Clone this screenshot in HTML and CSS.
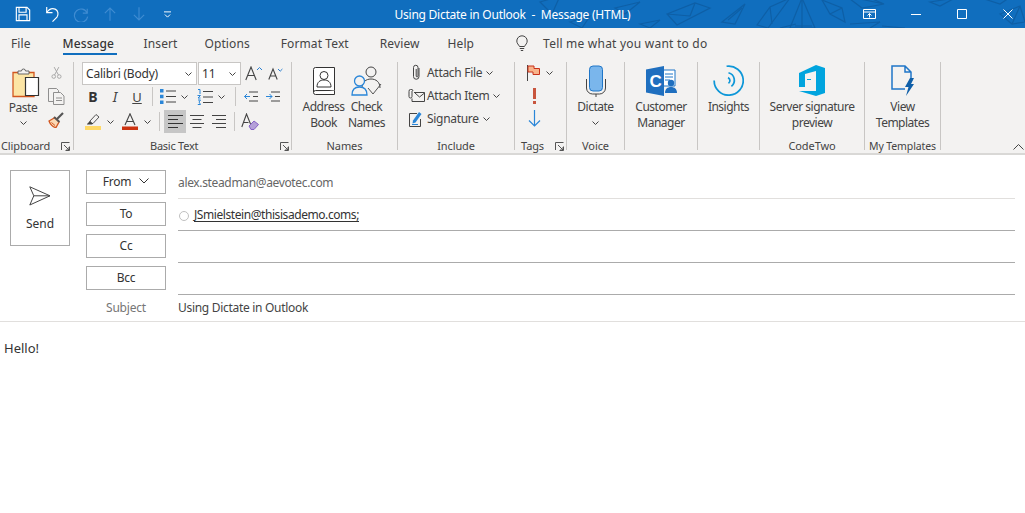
FILE: index.html
```html
<!DOCTYPE html>
<html lang="en">
<head>
<meta charset="utf-8">
<title>Using Dictate in Outlook - Message (HTML)</title>
<link rel="stylesheet" href="styles.css">
</head>
<body>
<header class="titlebar">
  <svg class="pattern" viewBox="0 0 1025 28" width="1025" height="28" aria-hidden="true">
    <g fill="none" stroke="#0e5fa6" stroke-width="1.2">
      <path d="M540 2L560 -4 552 14zM552 14L540 2"/>
      <path d="M667 14L695 3 710 8 677 25zM695 3L690 16M667 14L690 16"/>
      <path d="M722 22L745 4 735 24zM728 20L742 8"/>
      <path d="M757 25L770 7 790 -2 768 28zM770 7L772 24"/>
      <path d="M790 28L802 -2 815 28zM802 -2V28M795 26H812"/>
      <path d="M822 0L842 8 845 22 830 14zM830 14L842 8"/>
      <path d="M846 -4L884 4 862 8zM884 4L870 -2"/>
      <path d="M930 2L955 -2 940 6z"/>
      <path d="M975 -4L1000 4 1012 -4z"/>
      <path d="M1000 14L1020 6 1025 22 1012 24zM1020 6L1012 24"/>
      <path d="M882 26L905 28M850 24L880 22 870 28M780 28L796 24M615 8L640 2 625 14z"/>
      <path d="M570 22L590 16 582 28zM640 24L660 20 650 28z"/>
    </g>
  </svg>
  <div class="qat">
    <svg class="qat-save" width="16" height="16" viewBox="0 0 18 18"><g fill="none" stroke="#fff" stroke-width="1.300"><path d="M1.500 1.500h12l3 3v12h-15z"/><path d="M4.500 1.500v5.500h8v-5.500M4.500 16.500v-6.500h9v6.500"/></g></svg>
    <svg class="qat-undo" width="15" height="16" viewBox="0 0 16 18"><g fill="none" stroke="#fff" stroke-width="1.300"><path d="M1.500 1v6.500h6.500"/><path d="M1.500 7.500C4 3.500 8 2.500 11 3.500c3.500 1.500 4 6 2 9L8 17.500"/></g></svg>
    <svg class="qat-redo" width="16" height="16" viewBox="0 0 18 18"><g fill="none" stroke="#3f8cd2" stroke-width="1.300"><path d="M16 3v5h-5"/><path d="M16 8A7.500 7.500 0 1 0 16.500 12"/></g></svg>
    <svg class="qat-up" width="12" height="16" viewBox="0 0 14 18"><path d="M7 17V2M1 8l6-6 6 6" fill="none" stroke="#3f8cd2" stroke-width="1.300"/></svg>
    <svg class="qat-down" width="12" height="16" viewBox="0 0 14 18"><path d="M7 1v15M1 10l6 6 6-6" fill="none" stroke="#3f8cd2" stroke-width="1.300"/></svg>
    <svg class="qat-more" width="7" height="7" viewBox="0 0 8 8"><path d="M0 1h8M1 4l3 3 3-3" fill="none" stroke="#fff" stroke-width="1.100"/></svg>
  </div>
  <div class="title">Using Dictate in Outlook&nbsp; -&nbsp; Message (HTML)</div>
  <div class="winctl">
    <svg class="win-ribbon" width="13" height="10" viewBox="0 0 13 10"><g fill="none" stroke="#fff"><path d="M.5.500h12v9H.5zM.5 3h12M6.500 8.500V4.500M4.500 6.500l2-2 2 2"/></g></svg>
    <svg class="win-min" width="10" height="1" viewBox="0 0 10 1"><path d="M0 .5h10" stroke="#fff"/></svg>
    <svg class="win-max" width="10" height="10" viewBox="0 0 10 10"><path d="M.5.500h9v9h-9z" fill="none" stroke="#fff"/></svg>
    <svg class="win-close" width="10" height="10" viewBox="0 0 10 10"><path d="M.5.500l9 9M9.500.500l-9 9" fill="none" stroke="#fff"/></svg>
  </div>
</header>

<nav class="tabs">
  <span class="tab t-file">File</span>
  <span class="tab t-message active">Message</span>
  <span class="tab t-insert">Insert</span>
  <span class="tab t-options">Options</span>
  <span class="tab t-format">Format Text</span>
  <span class="tab t-review">Review</span>
  <span class="tab t-help">Help</span>
  <svg class="bulb" width="12" height="17" viewBox="0 0 12 17"><path d="M3.500 11.500C2.500 9.500.8 8.500.8 6A5.200 5.200 0 0 1 11.200 6c0 2.500-1.700 3.500-2.700 5.500zM3.800 13.500h4.400M4.800 15.500h2.400" fill="none" stroke="#444" stroke-width="1"/></svg>
  <span class="tell">Tell me what you want to do</span>
</nav>

<section class="ribbon">
  <div class="group g-clip">
    <div class="g-body clip-body">
      <div class="paste">
        <svg class="paste-ico" width="28" height="30" viewBox="0 0 28 30"><path d="M1 4.500h21v24H1z" fill="#fce5a5" stroke="#d2561f" stroke-width="1.300"/><path d="M6 6V3h3.500a2 2 0 0 1 4 0H17v3z" fill="#f3f2f1" stroke="#666"/><path d="M13.500 9.500h13v18h-13z" fill="#fff" stroke="#333" stroke-width="1.200"/></svg>
        <span class="lbl">Paste</span>
        <svg class="chev-s" width="7" height="4" viewBox="0 0 7 4"><path d="M.5.500l3 3 3-3" fill="none" stroke="#444"/></svg>
      </div>
      <div class="clip-tools">
        <svg width="11" height="16" viewBox="0 0 14 16"><g fill="none" stroke="#a5a5a5" stroke-width="1.200"><circle cx="3.500" cy="12.500" r="2.300"/><circle cx="10.500" cy="12.500" r="2.300"/><path d="M4.500 10.500L10 .5M9.500 10.500L4 .5"/></g></svg>
        <svg width="17" height="17" viewBox="0 0 17 17"><g fill="#f3f2f1" stroke="#8f8f8f"><path d="M.5.500h8l2 2v11H.5z"/><path d="M5.500 4.500h7l3.500 3.500v8.500H5.500z"/><path d="M8 10h6M8 12.500h6" fill="none"/></g></svg>
        <svg width="17" height="16" viewBox="0 0 17 16"><path d="M9 7l6-6" stroke="#555" stroke-width="2.200"/><path d="M1 9l6-3.500 4 4.500-3 5.500C5 15.500 2 12 1 9z" fill="#fbd9b4" stroke="#d2561f" stroke-width="1.300"/><path d="M6 5l5.500 5" stroke="#555" stroke-width="1.800"/><path d="M3.500 10.500l3.500 3" stroke="#d2561f"/></svg>
      </div>
    </div>
    <div class="g-label label-clip"><span>Clipboard</span><svg class="launch" width="9" height="9" viewBox="0 0 9 9"><path d="M.5 8V.5h8M8.500 4.500v4h-4M3 3l5 5M5 8h3V5" fill="none" stroke="#555"/></svg></div>
  </div>

  <div class="group g-basic">
    <div class="g-body basic-body">
      <div class="brow brow-1">
        <div class="combo combo-font"><span>Calibri (Body)</span><svg width="7" height="4" viewBox="0 0 7 4"><path d="M.5.500l3 3 3-3" fill="none" stroke="#444"/></svg></div>
        <div class="combo combo-size"><span>11</span><svg width="7" height="4" viewBox="0 0 7 4"><path d="M.5.500l3 3 3-3" fill="none" stroke="#444"/></svg></div>
        <svg class="grow" width="17" height="15" viewBox="0 0 17 15"><path d="M.8 14L6 1l5.200 13M2.700 9.500h6.600" fill="none" stroke="#444" stroke-width="1.100"/><path d="M12 4l2.500-2.500L17 4" fill="none" stroke="#2a7fd0"/></svg>
        <svg class="shrink" width="15" height="13" viewBox="0 0 15 13"><path d="M.8 12.500L5 2l4.200 10.500M2.300 9h5.400" fill="none" stroke="#444" stroke-width="1.100"/><path d="M10 2l2.200 2.200L14.400 2" fill="none" stroke="#2a7fd0"/></svg>
      </div>
      <div class="brow brow-2">
        <span class="cell c22 bold">B</span>
        <span class="cell c22 ital">I</span>
        <span class="cell c22 under">U</span>
        <i class="vsep vsep-a"></i>
        <div class="cell c36">
          <svg width="16" height="15" viewBox="0 0 16 15"><path d="M0 0h3.500v3.500H0zM0 5.700h3.500v3.500H0zM0 11.500h3.500V15H0z" fill="#2a86d8"/><path d="M6 2h10M6 7.500h10M6 13h10" stroke="#444" fill="none"/></svg>
          <svg class="ml-c" width="7" height="4" viewBox="0 0 7 4"><path d="M.5.500l3 3 3-3" fill="none" stroke="#444"/></svg>
        </div>
        <div class="cell c37">
          <svg width="16" height="16" viewBox="0 0 16 16"><path d="M1 .5h2V5M.5 6.500h3L1 9h2.500M1 11h2.500L2 13l1.500 2.500H.8" fill="none" stroke="#2a86d8" stroke-width="1"/><path d="M6 2.500h10M6 8h10M6 13.500h10" stroke="#444" fill="none"/></svg>
          <svg class="ml-c" width="7" height="4" viewBox="0 0 7 4"><path d="M.5.500l3 3 3-3" fill="none" stroke="#444"/></svg>
        </div>
        <i class="vsep vsep-b"></i>
        <span class="cell c22"><svg width="14" height="11" viewBox="0 0 14 11"><path d="M5 1h9M9 5.500h5M5 10h9" stroke="#444" fill="none"/><path d="M6 5.500H.5M3 3L.5 5.500 3 8" stroke="#2a86d8" fill="none"/></svg></span>
        <span class="cell c22"><svg width="14" height="11" viewBox="0 0 14 11"><path d="M5 1h9M9 5.500h5M5 10h9" stroke="#444" fill="none"/><path d="M0 5.500h6M3.500 3L6 5.500 3.500 8" stroke="#2a86d8" fill="none"/></svg></span>
      </div>
      <div class="brow brow-3">
        <div class="cell c34">
          <svg width="16" height="17" viewBox="0 0 16 17"><path d="M5 8l6-6.500 3 2.500-6 6.500H5z" fill="none" stroke="#555"/><path d="M2 11l3-3 3 2.500-1 1H2z" fill="#444"/><path d="M0 13h16v4H0z" fill="#ffd966"/></svg>
          <svg class="ml-h" width="7" height="4" viewBox="0 0 7 4"><path d="M.5.500l3 3 3-3" fill="none" stroke="#444"/></svg>
        </div>
        <div class="cell c37b">
          <svg width="16" height="17" viewBox="0 0 16 17"><path d="M3 12L8 .8 13 12M4.700 8.500h6.600" fill="none" stroke="#444" stroke-width="1.100"/><path d="M0 13.500h16V17H0z" fill="#cc3311"/></svg>
          <svg class="ml-h" width="7" height="4" viewBox="0 0 7 4"><path d="M.5.500l3 3 3-3" fill="none" stroke="#444"/></svg>
        </div>
        <i class="vsep vsep-c"></i>
        <span class="cell c22 sel"><svg width="15" height="13" viewBox="0 0 15 13"><path d="M0 .5h15M0 4.500h10M0 8.500h15M0 12.500h10" stroke="#333" fill="none"/></svg></span>
        <span class="cell c22"><svg width="14" height="13" viewBox="0 0 14 13"><path d="M0 .5h14M2.500 4.500h9M0 8.500h14M2.500 12.500h9" stroke="#444" fill="none"/></svg></span>
        <span class="cell c22"><svg width="14" height="13" viewBox="0 0 14 13"><path d="M0 .5h14M4 4.500h10M0 8.500h14M4 12.500h10" stroke="#444" fill="none"/></svg></span>
        <i class="vsep vsep-d"></i>
        <span class="cell c22"><svg width="18" height="17" viewBox="0 0 18 17"><path d="M.8 14L5.500 1l4 10M2.500 9.500h5" fill="none" stroke="#444" stroke-width="1.100"/><path d="M8 13l5-5 4.500 3.500-4.500 5H10z" fill="#b4a0d8" stroke="#8661c5"/></svg></span>
      </div>
    </div>
    <div class="g-label label-basic"><span>Basic Text</span><svg class="launch" width="9" height="9" viewBox="0 0 9 9"><path d="M.5 8V.5h8M8.500 4.500v4h-4M3 3l5 5M5 8h3V5" fill="none" stroke="#555"/></svg></div>
  </div>

  <div class="group g-names">
    <div class="g-body pad-names">
      <div class="big w43">
        <span class="big-ico"><svg width="22" height="28" viewBox="0 0 22 28"><path d="M.5 2.500A2 2 0 0 1 2.500.500h19v23H2.500a2 2 0 0 0-2 2v-23z" fill="#fff" stroke="#333"/><path d="M.5 25.500a2 2 0 0 0 2 2h19v-4" fill="#fff" stroke="#333"/><circle cx="11" cy="8.500" r="4" fill="none" stroke="#333"/><path d="M4 20c0-5 3-7 7-7s7 2 7 7z" fill="none" stroke="#333"/></svg></span>
        <span class="lbl">Address</span><span class="lbl">Book</span>
      </div>
      <div class="big w43">
        <span class="big-ico"><svg width="31" height="30" viewBox="0 0 31 30"><circle cx="20" cy="6" r="5" fill="#f3f2f1" stroke="#444"/><path d="M11 22c0-6 4-9 9-9s9 3 9 9" fill="#f3f2f1" stroke="#444"/><circle cx="8.500" cy="15" r="5" fill="#f3f2f1" stroke="#2a86d8" stroke-width="1.300"/><path d="M1 29c0-6 3-8 7.500-8s7.500 2 7.500 8z" fill="#f3f2f1" stroke="#2a86d8" stroke-width="1.300"/><path d="M17 22l5 6 8-10" fill="none" stroke="#555"/></svg></span>
        <span class="lbl">Check</span><span class="lbl">Names</span>
      </div>
    </div>
    <div class="g-label">Names</div>
  </div>

  <div class="group g-include">
    <div class="g-body col pad-include">
      <div class="srow"><span class="sico"><svg width="9" height="17" viewBox="0 0 9 17"><path d="M7 4v8.500a2.700 2.700 0 0 1-5.500 0V3.500a2 2 0 0 1 4.500 0V12a.9.900 0 0 1-1.800 0V5" fill="none" stroke="#444"/></svg></span><span class="lbl">Attach File</span><svg class="sch" width="7" height="4" viewBox="0 0 7 4"><path d="M.5.500l3 3 3-3" fill="none" stroke="#444"/></svg></div>
      <div class="srow"><span class="sico"><svg width="17" height="13" viewBox="0 0 17 13"><path d="M6 3.500h10.500v9H4v-3M7 4l4.500 4L16.500 4" fill="none" stroke="#444"/><path d="M4 2v5.500a1.500 1.500 0 0 1-3 0V2.500a2 2 0 0 1 4-.5" fill="none" stroke="#444"/></svg></span><span class="lbl">Attach Item</span><svg class="sch" width="7" height="4" viewBox="0 0 7 4"><path d="M.5.500l3 3 3-3" fill="none" stroke="#444"/></svg></div>
      <div class="srow"><span class="sico"><svg width="15" height="17" viewBox="0 0 15 17"><path d="M.5 3.500v13h11V9M.5 3.500H8" fill="none" stroke="#444"/><path d="M4 10.500L10 2l2.500 2-6 8.500-3 1z" fill="#2a86d8"/><path d="M3 14.500h6" stroke="#2a86d8"/></svg></span><span class="lbl">Signature</span><svg class="sch" width="7" height="4" viewBox="0 0 7 4"><path d="M.5.500l3 3 3-3" fill="none" stroke="#444"/></svg></div>
    </div>
    <div class="g-label">Include</div>
  </div>

  <div class="group g-tags">
    <div class="g-body col pad-tags">
      <div class="srow"><svg width="13" height="16" viewBox="0 0 13 16"><path d="M.5 0v16" stroke="#444"/><path d="M1 1h6v2.500h5.500v6H6V7H1z" fill="#f8b38a" stroke="#c8311a"/></svg><svg class="flag-ch" width="7" height="4" viewBox="0 0 7 4"><path d="M.5.500l3 3 3-3" fill="none" stroke="#444"/></svg></div>
      <div class="srow tagmid"><svg width="3" height="16" viewBox="0 0 3 16"><path d="M0 0h3v11H0zM0 13h3v3H0z" fill="#c8553d"/></svg></div>
      <div class="srow tagmid"><svg width="13" height="17" viewBox="0 0 13 17"><path d="M6.500 0v16M1 10.500l5.500 5.500 5.500-5.500" fill="none" stroke="#2a86d8" stroke-width="1.200"/></svg></div>
    </div>
    <div class="g-label label-tags"><span>Tags</span><svg class="launch" width="9" height="9" viewBox="0 0 9 9"><path d="M.5 8V.5h8M8.500 4.500v4h-4M3 3l5 5M5 8h3V5" fill="none" stroke="#555"/></svg></div>
  </div>

  <div class="group g-voice">
    <div class="g-body">
      <div class="big full">
        <span class="big-ico"><svg width="20" height="32" viewBox="0 0 20 32"><path d="M.5 14v9a6 6 0 0 0 6 6h7a6 6 0 0 0 6-6v-9M10 29v3" fill="none" stroke="#444"/><rect x="3.500" y="1" width="13" height="25" rx="3.500" fill="#7ab6ec" stroke="#1f76c8"/></svg></span>
        <span class="lbl">Dictate</span>
        <svg class="chev-big" width="7" height="4" viewBox="0 0 7 4"><path d="M.5.500l3 3 3-3" fill="none" stroke="#444"/></svg>
      </div>
    </div>
    <div class="g-label">Voice</div>
  </div>

  <div class="group g-cm">
    <div class="g-body">
      <div class="big full">
        <span class="big-ico"><svg width="31" height="30" viewBox="0 0 31 30"><path d="M17 4h12v16H17z" fill="#fff" stroke="#1f76c8"/><path d="M19 8h8M19 11h8M19 14h5" stroke="#1f76c8"/><path d="M0 3.500L18 0v30L0 26.500z" fill="#1f6fbf"/><text class="cm-c" x="3.500" y="21">C</text><circle cx="25" cy="17" r="3.200" fill="#1f6fbf"/><path d="M19 27c0-4 2.500-6 6-6s6 2 6 6z" fill="#1f6fbf"/></svg></span>
        <span class="lbl">Customer</span><span class="lbl">Manager</span>
      </div>
    </div>
    <div class="g-label"></div>
  </div>

  <div class="group g-ins">
    <div class="g-body">
      <div class="big full">
        <span class="big-ico"><svg width="31" height="31" viewBox="0 0 32 32"><g fill="none" stroke="#0e97d8" stroke-width="1.800"><path d="M14 1.300A15 15 0 1 1 1.200 16"/><path d="M16 8a8 8 0 0 1 3 14"/><path d="M15.500 13a3.500 3.500 0 0 1 .5 6"/></g></svg></span>
        <span class="lbl">Insights</span>
      </div>
    </div>
    <div class="g-label"></div>
  </div>

  <div class="group g-code">
    <div class="g-body">
      <div class="big full">
        <span class="big-ico"><svg width="26" height="31" viewBox="0 0 26 31"><path d="M0 8L17 0l9 3v25l-9 3-17-5h17V6L6 9v2H0z" fill="#00a4de"/><path d="M0 11h6v11H0z" fill="#00a4de"/><path d="M6 13h5v-3l6 6-6 6v-3H6z" fill="#f3f2f1"/><path d="M8 14.500h4" stroke="#00a4de"/></svg></span>
        <span class="lbl">Server signature</span><span class="lbl">preview</span>
      </div>
    </div>
    <div class="g-label">CodeTwo</div>
  </div>

  <div class="group g-tmpl">
    <div class="g-body">
      <div class="big full">
        <span class="big-ico"><svg width="24" height="32" viewBox="0 0 24 32"><path d="M14 24H1V1h13l6 6v6M14 1v6h6" fill="none" stroke="#1f76c8" stroke-width="1.500"/><path d="M19 13h4l-3 6h3l-8 12 2.500-9H14z" fill="#0f5fa8"/></svg></span>
        <span class="lbl">View</span><span class="lbl">Templates</span>
      </div>
    </div>
    <div class="g-label label-tight">My Templates</div>
  </div>

  <div class="rest"><svg width="11" height="6" viewBox="0 0 11 6"><path d="M.5 5.500l5-5 5 5" fill="none" stroke="#444"/></svg></div>
</section>

<main class="compose">
  <button class="send"><svg width="22" height="20" viewBox="0 0 22 20"><path d="M.8.800L21 9.800.8 19l4-9.200zM4.800 9.800H21" fill="none" stroke="#444"/></svg><span>Send</span></button>
  <div class="fbtn b-from"><span>From</span><svg width="10" height="6" viewBox="0 0 10 6"><path d="M.5.500l4.500 4.500 4.500-4.500" fill="none" stroke="#333"/></svg></div>
  <div class="field f-light">alex.steadman@aevotec.com</div>
  <div class="fbtn">To</div>
  <div class="field f-to"><span class="presence"></span><span class="addr">JSmielstein@thisisademo.coms;</span></div>
  <div class="fbtn">Cc</div>
  <div class="field"></div>
  <div class="fbtn">Bcc</div>
  <div class="field"></div>
  <div class="subj-label">Subject</div>
  <div class="subj">Using Dictate in Outlook</div>
</main>
<div class="bodytext">Hello!</div>
</body>
</html>
```

FILE: styles.css
```css
* { box-sizing: border-box; }
html, body { margin: 0; padding: 0; }
body {
  width: 1025px;
  height: 513px;
  overflow: hidden;
  background: #fff;
  font-family: "Noto Sans", "Open Sans", sans-serif;
  font-size: 12px;
  color: #444;
}
svg { display: block; flex: none; }

/* title bar */
.titlebar {
  position: relative;
  height: 28px;
  background: #106ebe;
  display: grid;
  grid-template-columns: 1fr auto 1fr;
  align-items: center;
  overflow: hidden;
}
.pattern { position: absolute; left: 0; top: 0; }
.qat { position: relative; display: flex; align-items: center; padding-left: 15px; }
.qat-undo { margin-left: 14px; }
.qat-redo { margin-left: 13px; }
.qat-up { margin-left: 15px; }
.qat-down { margin-left: 17px; }
.qat-more { margin-left: 19px; }
.title { position: relative; color: #fff; font-size: 12px; letter-spacing: -.25px; }
.winctl { position: relative; display: flex; align-items: center; justify-content: flex-end; padding-right: 12px; }
.win-min { margin-left: 35px; }
.win-max { margin-left: 36px; }
.win-close { margin-left: 36px; }

/* tabs */
.tabs {
  height: 32px;
  background: #f3f2f1;
  display: flex;
  align-items: flex-start;
  padding: 4px 0 0 11px;
}
.tab {
  height: 23px;
  line-height: 23px;
  color: #444;
  white-space: nowrap;
  letter-spacing: .1px;
}
.t-message { margin-left: 32px; border-bottom: 2px solid #106ebe; width: 54px; color: #333; font-weight: 500; }
.t-insert { margin-left: 27px; }
.t-options { margin-left: 27px; }
.t-format { margin-left: 31px; }
.t-review { margin-left: 31px; }
.t-help { margin-left: 28px; }
.bulb { margin: 3px 0 0 42px; }
.tell { margin-left: 15px; line-height: 23px; letter-spacing: .22px; }

/* ribbon */
.ribbon {
  height: 95px;
  background: #f3f2f1;
  border-bottom: 2px solid #d9d8d6;
  display: flex;
  padding: 2px 0 3px;
}
.group {
  display: flex;
  flex-direction: column;
  border-right: 1px solid #c8c6c4;
  flex: none;
}
.g-clip { width: 74px; }
.g-basic { width: 218px; }
.g-names { width: 106px; }
.g-include { width: 117px; }
.g-tags { width: 52px; }
.g-voice { width: 58px; }
.g-cm { width: 73px; }
.g-ins { width: 62px; }
.g-code { width: 105px; }
.g-tmpl { width: 76px; }
.rest { flex: 1; display: flex; justify-content: flex-end; align-items: flex-end; padding: 0 1px 0 0; }
.g-body { flex: 1; display: flex; min-height: 0; }
.col { flex-direction: column; margin-top: -1px; }
.g-label {
  height: 14px;
  line-height: 14px;
  margin-bottom: -3px;
  font-size: 11px;
  letter-spacing: -.1px;
  text-align: center;
  color: #444;
  white-space: nowrap;
  flex: none;
}
.label-clip, .label-basic, .label-tags { display: flex; align-items: center; justify-content: space-between; }
.label-clip { padding: 0 3px 0 1px; }
.label-basic { padding: 0 2px 0 76px; letter-spacing: -.25px; }
.label-tags { padding: 0 2px 0 6px; }
.label-tight { font-size: 10.5px; }

.lbl { display: block; line-height: 16px; color: #444; white-space: nowrap; letter-spacing: -.5px; }
.srow .lbl { letter-spacing: -.3px; }

/* clipboard */
.clip-body { padding-left: 4px; }
.paste { width: 38px; display: flex; flex-direction: column; align-items: center; padding-top: 6px; }
.paste-ico { margin-left: 5px; }
.paste .lbl { margin-top: 2px; }
.chev-s { margin-top: 5px; }
.clip-tools { display: flex; flex-direction: column; align-items: center; width: 28px; padding-top: 3px; gap: 7px; }

/* basic text */
.basic-body { flex-direction: column; padding-left: 8px; }
.brow { display: flex; align-items: center; }
.brow-1 { height: 23px; }
.brow-2 { height: 23px; }
.brow-3 { height: 23px; margin-top: 2px; }
.combo {
  height: 23px;
  background: #fff;
  border: 1px solid #c8c6c4;
  display: flex;
  align-items: center;
  justify-content: space-between;
  padding: 0 4px 0 3px;
  color: #333;
  letter-spacing: -.2px;
}
.combo-font { width: 115px; margin-right: 1px; }
.combo-size { width: 43px; }
.grow { margin-left: 4px; }
.shrink { margin-left: 6px; }
.cell { display: flex; align-items: center; justify-content: center; height: 23px; flex: none; }
.c22 { width: 22px; }
.c34 { width: 34px; justify-content: flex-start; padding-left: 3px; }
.c36 { width: 36px; justify-content: flex-start; padding-left: 3px; }
.c37 { width: 37px; justify-content: flex-start; padding-left: 4px; }
.c37b { width: 37px; justify-content: flex-start; padding-left: 6px; }
.ml-c { margin-left: 5px; }
.ml-h { margin-left: 6px; }
.bold { font-weight: 700; font-size: 14px; color: #333; }
.ital { font-style: italic; font-size: 14px; }
.under { text-decoration: underline; font-size: 13px; }
.sel { background: #c6c6c6; }
.vsep { width: 1px; height: 19px; background: #c8c6c4; flex: none; }
.vsep-a { margin: 0 4px; }
.vsep-b { margin: 0 4px 0 5px; }
.vsep-c { margin: 0 4px 0 6px; }
.vsep-d { margin: 0 4px; }

/* big buttons */
.big { display: flex; flex-direction: column; align-items: center; }
.big-ico { height: 37px; display: flex; align-items: center; justify-content: center; }
.w43 { width: 43px; }
.full { width: 100%; }
.pad-names { padding-left: 10px; }
.chev-big { margin-top: 6px; }
.cm-c { font: 700 17px "Liberation Sans", sans-serif; fill: #fff; }

/* include / tags */
.srow { display: flex; align-items: center; height: 23px; }
.pad-include { padding-left: 9px; }
.sico { width: 19px; margin-right: 1px; display: flex; justify-content: center; }
.sch { margin-left: 4px; }
.pad-tags { padding-left: 12px; }
.flag-ch { margin-left: 6px; }
.tagmid { width: 14px; justify-content: center; }

/* compose */
.compose {
  display: grid;
  grid-template-columns: 60px 96px 1fr;
  grid-template-rows: 32px 32px 32px 32px 24px;
  padding: 15px 10px 0;
  border-bottom: 1px solid #e1dfdd;
  background: #fff;
  height: 167px;
}
.send {
  grid-row: 1 / span 3;
  grid-column: 1;
  width: 60px;
  height: 76px;
  background: #fff;
  border: 1px solid #ababab;
  padding: 0;
  display: flex;
  flex-direction: column;
  align-items: center;
  font: inherit;
  color: #333;
}
.send svg { margin: 15px 0 9px; }
.fbtn {
  grid-column: 2;
  margin-left: 16px;
  width: 80px;
  height: 24px;
  border: 1px solid #ababab;
  padding-bottom: 2px;
  display: flex;
  align-items: center;
  justify-content: center;
  gap: 8px;
  color: #333;
  letter-spacing: -.2px;
}
.field {
  grid-column: 3;
  margin-left: 12px;
  height: 29px;
  border-bottom: 1px solid #ababab;
  display: flex;
  align-items: center;
  color: #333;
}
.f-light { border-bottom-color: #e1dfdd; color: #666; padding-bottom: 4px; letter-spacing: -.35px; }
.f-to { padding-bottom: 2px; }
.presence { width: 10px; height: 10px; border: 1px solid #c0c0c0; border-radius: 50%; margin: 1px 5px 0 1px; }
.addr { border-bottom: 1px solid #333; line-height: 13px; letter-spacing: -.43px; }
.subj-label { grid-column: 2; margin-left: 16px; width: 80px; text-align: center; color: #767676; line-height: 20px; letter-spacing: -.2px; }
.subj { grid-column: 3; margin-left: 12px; color: #444; line-height: 20px; letter-spacing: -.3px; }
.bodytext { padding: 17px 0 0 4px; font-size: 13px; line-height: 18px; color: #333; }
```
